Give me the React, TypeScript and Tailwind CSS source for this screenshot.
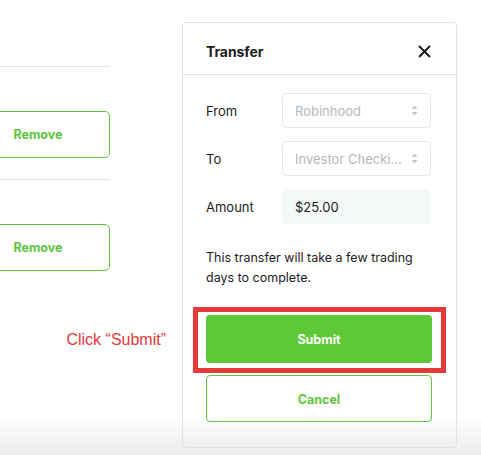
import React from "react";

function SelectArrows() {
  return (
    <svg width="7" height="11" viewBox="0 0 7 11" className="shrink-0">
      <path d="M3.5 0.5 L6.5 4 L0.5 4 Z" fill="#c3c7cb" />
      <path d="M3.5 10.5 L6.5 7 L0.5 7 Z" fill="#c3c7cb" />
    </svg>
  );
}

function RemoveButton() {
  return (
    <button
      type="button"
      className="ml-[-34px] flex h-[47px] w-[144px] items-center justify-center rounded-[5px] border border-[#5ec53c] pt-[2px] text-[12.5px] font-bold text-[#5ec53c]"
    >
      Remove
    </button>
  );
}

export default function App() {
  const font = { fontFamily: "Inter, 'Noto Sans', sans-serif" };

  return (
    <div
      className="relative h-[455px] w-[481px] overflow-hidden bg-[linear-gradient(to_bottom,#ffffff_415px,#ebebeb_455px)] text-[#1b1b1b]"
      style={font}
    >
      <div className="flex">
        {/* ─── Left list + note ─── */}
        <div className="flex w-[182px] flex-col">
          <div className="w-[110px]">
            <div className="mt-[66px] h-px bg-[#e3e3e3]" />
            <div className="mt-[44px]">
              <RemoveButton />
            </div>
            <div className="mt-[21px] h-px bg-[#e3e3e3]" />
            <div className="mt-[44px]">
              <RemoveButton />
            </div>
          </div>
          <p
            className="mt-[60px] pr-[16px] text-right text-[16px] leading-[18px] text-[#e0383a]"
            style={{ fontFamily: "'Liberation Sans', Arial, sans-serif" }}
          >
            Click “Submit”
          </p>
        </div>

        {/* ─── Transfer panel ─── */}
        <div className="mt-[22px] flex h-[426px] w-[275px] flex-col rounded-[4px] border border-[#e2e2e2]">
          <div className="flex h-[52px] shrink-0 items-center justify-between border-b border-[#e2e2e2] pl-[23px] pr-[25px] pt-[6px]">
            <h1 className="text-[14px] font-bold tracking-[-0.1px]">Transfer</h1>
            <svg width="13" height="13" viewBox="0 0 13 13">
              <path d="M1 1 L12 12 M12 1 L1 12" stroke="#111" strokeWidth="1.8" />
            </svg>
          </div>

          <div className="flex flex-col px-[23px] pt-[18px]">
            <div className="flex items-center">
              <span className="w-[76px] pt-[3px] text-[13px]">From</span>
              <div className="flex h-[35px] w-[149px] items-center justify-between rounded-[4px] border border-[#e4e6e8] pl-[12px] pr-[12px]">
                <span className="pt-[3px] text-[13px] text-[#b3b8bd]">Robinhood</span>
                <SelectArrows />
              </div>
            </div>

            <div className="mt-[13px] flex items-center">
              <span className="w-[76px] pt-[3px] text-[13px]">To</span>
              <div className="flex h-[35px] w-[149px] items-center justify-between rounded-[4px] border border-[#e4e6e8] pl-[12px] pr-[12px]">
                <span className="pt-[3px] text-[13px] text-[#b3b8bd]">Investor Checki...</span>
                <SelectArrows />
              </div>
            </div>

            <div className="mt-[13px] flex items-center">
              <span className="w-[76px] pt-[3px] text-[13px]">Amount</span>
              <div className="flex h-[35px] w-[149px] items-center rounded-[4px] bg-[#f5f8f9] pl-[13px]">
                <span className="pt-[3px] text-[13px]">$25.00</span>
              </div>
            </div>

            <p className="mt-[24px] text-[12.5px] leading-[20px]">
              This transfer will take a few trading days to complete.
            </p>

            <div className="relative mt-[27px]">
              <button
                type="button"
                className="flex h-[48px] w-[226px] items-center justify-center rounded-[4px] bg-[#5fc836] pt-[3px] text-[12.5px] font-bold text-white"
              >
                Submit
              </button>
              <div className="pointer-events-none absolute left-[-13px] top-[-8px] h-[66px] w-[253px] border-[5px] border-[#e33b38]" />
            </div>

            <button
              type="button"
              className="mt-[12px] flex h-[47px] w-[226px] items-center justify-center rounded-[4px] border border-[#5ec53c] pt-[3px] text-[12.5px] font-bold text-[#5ec53c]"
            >
              Cancel
            </button>
          </div>
        </div>
      </div>
    </div>
  );
}
